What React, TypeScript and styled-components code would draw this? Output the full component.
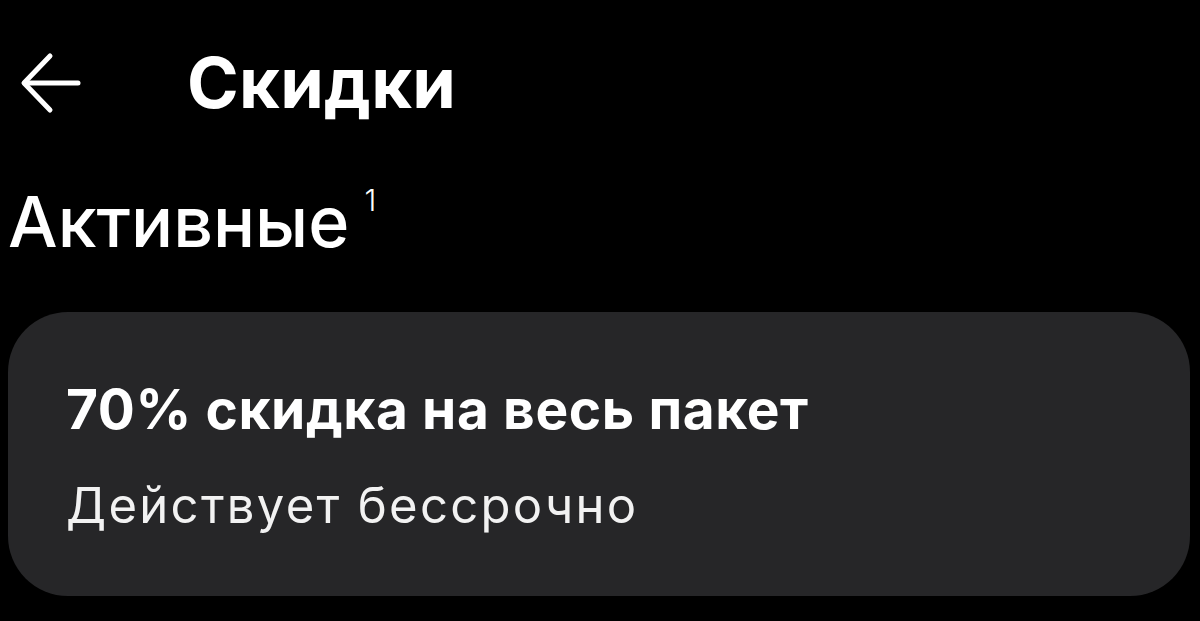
import React from "react";
import styled, { createGlobalStyle } from "styled-components";

const Global = createGlobalStyle`
  html, body { margin: 0; padding: 0; background: #000; }
  body { font-family: "Inter", "Liberation Sans", sans-serif; color: #fff; }
`;

const Page = styled.div`
  width: 1200px;
  height: 621px;
  background: #000;
  overflow: hidden;
  display: flex;
  flex-direction: column;
`;

const Header = styled.div`
  display: flex;
  align-items: center;
  height: 70px;
  margin-top: 48px;
  padding-left: 20px;
`;

const BackButton = styled.button`
  background: none;
  border: none;
  padding: 0;
  width: 62px;
  height: 62px;
  display: flex;
  align-items: center;
  justify-content: center;
  color: #fff;
  margin-right: 105px;
`;

const Title = styled.h1`
  margin: 0;
  font-size: 70px;
  font-weight: 700;
  letter-spacing: 0.3px;
  line-height: 1;
`;

const SectionTitle = styled.h2`
  margin: 69px 0 0 8px;
  font-size: 70px;
  font-weight: 500;
  line-height: 1;
  display: flex;
  align-items: flex-start;
`;

const Count = styled.sup`
  font-size: 30px;
  font-weight: 300;
  margin-left: 15px;
  margin-top: -2px;
  line-height: 1;
  vertical-align: top;
`;

const Card = styled.div`
  margin: 55px 10px 0 8px;
  height: 284px;
  border-radius: 60px;
  background: #262628;
  padding: 70px 58px 0;
  box-sizing: border-box;
`;

const CardTitle = styled.div`
  font-size: 55px;
  font-weight: 700;
  letter-spacing: 0.6px;
  line-height: 1;
`;

const CardSub = styled.div`
  margin-top: 44px;
  font-size: 49px;
  font-weight: 400;
  letter-spacing: 2.3px;
  line-height: 1;
  color: #f2f2f2;
`;

export default function App() {
  return (
    <>
      <Global />
      <Page>
        <Header>
          <BackButton aria-label="Назад">
            <svg width="62" height="62" viewBox="0 0 62 62" fill="none" stroke="#fff" strokeWidth="5" strokeLinecap="round" strokeLinejoin="round">
              <path d="M58 31H5" />
              <path d="M30 4L4 31l26 27" />
            </svg>
          </BackButton>
          <Title>Скидки</Title>
        </Header>
        <SectionTitle>
          Активные<Count>1</Count>
        </SectionTitle>
        <Card>
          <CardTitle>70% скидка на весь пакет</CardTitle>
          <CardSub>Действует бессрочно</CardSub>
        </Card>
      </Page>
    </>
  );
}
